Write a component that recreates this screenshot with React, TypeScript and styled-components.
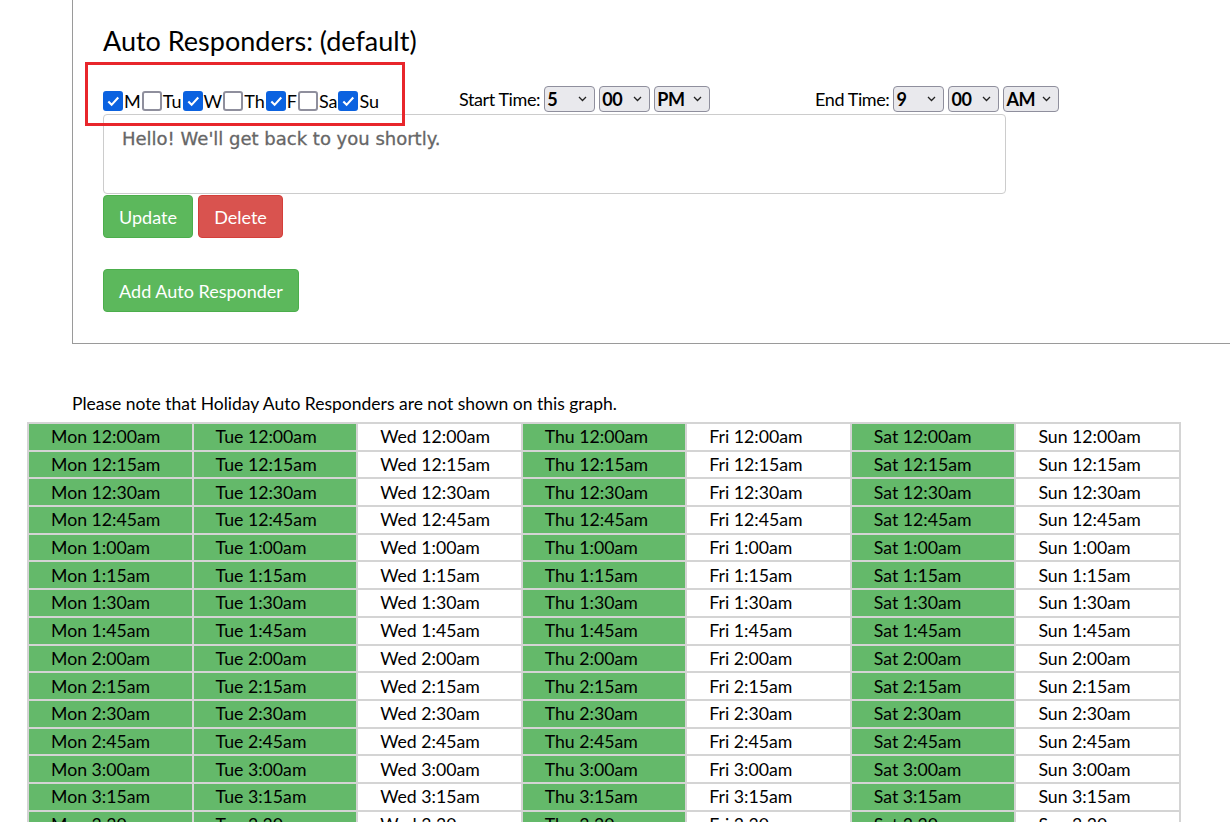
import React from "react";
import styled, { createGlobalStyle } from "styled-components";

const G = createGlobalStyle`
  body { margin: 0; font-family: Lato, "Liberation Sans", sans-serif; color: #000; background: #fff; overflow: hidden; }
`;
const Panel = styled.div`
  position: relative;
  margin-left: 72px; border-left: 1px solid #9a9a9a; border-bottom: 1px solid #9a9a9a;
  padding: 26px 0 30px 30px; height: 287px; box-sizing: content-box;
`;
const Highlight = styled.div`
  position: absolute; left: 12px; top: 62px; width: 314px; height: 58px; border: 3px solid #e8262b; pointer-events: none;
`;
const Title = styled.h2`font-size: 27px; font-weight: 400; margin: 0 0 30px; line-height: 30px;`;
const Controls = styled.div`display: flex; align-items: flex-end; height: 26px; font-size: 18px;`;
const Days = styled.div`display: flex; align-items: center; width: 356px;`;
const Day = styled.label`display: flex; align-items: center; margin-right: 1px; line-height: 22px;`;
const Box = styled.span<{ $on: boolean }>`
  width: 20px; height: 20px; border-radius: 3px; box-sizing: border-box; margin-right: 1px;
  background: ${p => (p.$on ? "#0b62e0" : "#fff")}; border: 2px solid ${p => (p.$on ? "#0b62e0" : "#8f8f9d")};
  display: flex; align-items: center; justify-content: center;
`;
const TimeGroup = styled.div<{ $w: number }>`display: flex; align-items: center; gap: 4px; width: ${p => p.$w}px; font-size: 18px; letter-spacing: -0.4px;`;
const Sel = styled.div<{ $w: number }>`
  width: ${p => p.$w}px; height: 26px; box-sizing: border-box; border: 1px solid #8f8f9d; border-radius: 4px;
  background: #e9e9ed; display: flex; align-items: center; justify-content: space-between; padding: 0 7px 0 2px; font-size: 18px; font-weight: 700;
`;
const TextArea = styled.div`
  width: 903px; height: 80px; box-sizing: border-box; border: 1px solid #ccc; border-radius: 4px;
  padding: 13px 18px; font-family: "DejaVu Sans", sans-serif; font-size: 18px; color: #666; margin-top: 2px;
  -webkit-text-stroke: 0.3px #666;
`;
const Btns = styled.div`display: flex; gap: 5px; margin-top: 1px;`;
const Btn = styled.button<{ $red?: boolean; $w: number }>`
  width: ${p => p.$w}px; height: 43px; border: 1px solid ${p => (p.$red ? "#d43f3a" : "#4cae4c")}; border-radius: 4px;
  background: ${p => (p.$red ? "#d9534f" : "#5cb85c")}; color: #fff; font-family: Lato, sans-serif; font-size: 18px;
`;
const AddWrap = styled.div`margin-top: 31px;`;
const Note = styled.p`margin: 50px 0 8px 72px; font-size: 17.5px; line-height: 20px;`;
const Table = styled.table`
  margin-left: 27px; width: 1154px; border-collapse: collapse; table-layout: fixed; font-size: 17.7px;
`;
const Row = styled.tr`height: 27.7px;`;
const Td = styled.td<{ $on: boolean }>`
  border: 2px solid #d4d4d4; background: ${p => (p.$on ? "#64b96a" : "#fff")};
  padding: 0 0 0 22px; line-height: 23px; white-space: nowrap; overflow: hidden;
`;

const Check = () => (
  <svg width="14" height="14" viewBox="0 0 12 12"><path d="M2 6.5l2.8 2.8L10.5 3" fill="none" stroke="#fff" strokeWidth="1.8" /></svg>
);
const Caret = () => (
  <svg width="9" height="6" viewBox="0 0 9 6"><path d="M1 1l3.5 3.5L8 1" fill="none" stroke="#222" strokeWidth="1.3" /></svg>
);

const days: [string, boolean][] = [["M", true], ["Tu", false], ["W", true], ["Th", false], ["F", true], ["Sa", false], ["Su", true]];
const cols: [string, boolean][] = [["Mon", true], ["Tue", true], ["Wed", false], ["Thu", true], ["Fri", false], ["Sat", true], ["Sun", false]];
const times: string[] = [];
for (let i = 0; i < 15; i++) {
  const m = i * 15;
  const h = Math.floor(m / 60);
  times.push(`${h === 0 ? 12 : h}:${String(m % 60).padStart(2, "0")}am`);
}

export default function App() {
  return (
    <>
      <G />
      <Panel>
        <Highlight />
        <Title>Auto Responders: (default)</Title>
        <Controls>
          <Days>
            {days.map(([d, on]) => (
              <Day key={d}><Box $on={on}>{on && <Check />}</Box>{d}</Day>
            ))}
          </Days>
          <TimeGroup $w={356}>
            Start Time:<Sel $w={51}>5<Caret /></Sel><Sel $w={51}>00<Caret /></Sel><Sel $w={56}>PM<Caret /></Sel>
          </TimeGroup>
          <TimeGroup $w={260}>
            End Time:<Sel $w={51}>9<Caret /></Sel><Sel $w={51}>00<Caret /></Sel><Sel $w={56}>AM<Caret /></Sel>
          </TimeGroup>
        </Controls>
        <TextArea>Hello! We'll get back to you shortly.</TextArea>
        <Btns><Btn $w={90}>Update</Btn><Btn $w={85} $red>Delete</Btn></Btns>
        <AddWrap><Btn $w={196}>Add Auto Responder</Btn></AddWrap>
      </Panel>
      <Note>Please note that Holiday Auto Responders are not shown on this graph.</Note>
      <Table>
        <tbody>
          {times.map(t => (
            <Row key={t}>
              {cols.map(([c, on]) => <Td key={c} $on={on}>{c} {t}</Td>)}
            </Row>
          ))}
        </tbody>
      </Table>
    </>
  );
}
